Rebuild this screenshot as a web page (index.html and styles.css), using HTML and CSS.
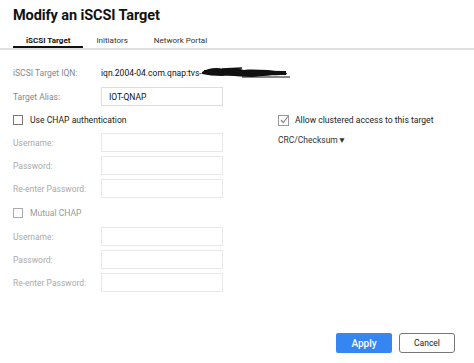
FILE: index.html
```html
<!DOCTYPE html>
<html>
<head>
<meta charset="utf-8">
<link rel="stylesheet" href="styles.css">
</head>
<body>
<div class="dialog">
  <div class="title">Modify an iSCSI Target</div>
  <div class="tabs">
    <div class="tab active">iSCSI Target</div>
    <div class="tab">Initiators</div>
    <div class="tab">Network Portal</div>
  </div>
  <div class="content">
    <div class="left">
      <div class="row row-iqn">
        <span class="label">iSCSI Target IQN:</span>
        <span class="value">iqn.2004-04.com.qnap:tvs-</span>
        <svg class="scribble" width="88" height="14" viewBox="0 0 88 14">
          <path d="M0 7 C6 3 14 2 22 4 C28 2 36 3 42 5 C50 4 58 5 66 5 C74 6 80 7 85 8 L84 10 C70 10 60 11 50 12 C40 12 30 10 20 11 C12 11 6 10 0 9 Z" fill="#111"/>
          <path d="M2 7 L84 8" stroke="#111" stroke-width="4"/>
          <path d="M40 12 L88 12" stroke="#111" stroke-width="1"/>
          <path d="M20 4 L40 3" stroke="#111" stroke-width="1.5"/>
        </svg>
      </div>
      <div class="row row-input row-alias">
        <span class="label">Target Alias:</span>
        <div class="input"><span class="input-text">IOT-QNAP</span></div>
      </div>
      <div class="row row-check row-chap">
        <span class="box"></span>
        <span class="check-text">Use CHAP authentication</span>
      </div>
      <div class="row row-input first disabled">
        <span class="label">Username:</span>
        <div class="input"></div>
      </div>
      <div class="row row-input disabled">
        <span class="label">Password:</span>
        <div class="input"></div>
      </div>
      <div class="row row-input disabled">
        <span class="label">Re-enter Password:</span>
        <div class="input"></div>
      </div>
      <div class="row row-check row-mutual disabled">
        <span class="box"></span>
        <span class="check-text">Mutual CHAP</span>
      </div>
      <div class="row row-input first2 disabled">
        <span class="label">Username:</span>
        <div class="input"></div>
      </div>
      <div class="row row-input disabled">
        <span class="label">Password:</span>
        <div class="input"></div>
      </div>
      <div class="row row-input disabled">
        <span class="label">Re-enter Password:</span>
        <div class="input"></div>
      </div>
    </div>
    <div class="right">
      <div class="row row-check">
        <span class="box checked">
          <svg width="10" height="10" viewBox="0 0 10 10"><path d="M2 5 L4.2 7.5 L9 1.5" fill="none" stroke="#888" stroke-width="1.2"/></svg>
        </span>
        <span class="check-text">Allow clustered access to this target</span>
      </div>
      <div class="crc">CRC/Checksum&#9660;</div>
    </div>
  </div>
  <div class="footer">
    <button class="btn apply">Apply</button>
    <button class="btn cancel">Cancel</button>
  </div>
</div>
</body>
</html>
```

FILE: styles.css
```css
html, body {
  margin: 0;
  padding: 0;
  background: #fff;
}
body {
  font-family: Roboto, "Liberation Sans", sans-serif;
  color: #333;
}
.dialog {
  height: 363px;
  display: flex;
  flex-direction: column;
  box-sizing: border-box;
}
.title {
  font-size: 14.5px;
  font-weight: bold;
  color: #111;
  padding: 7px 13px 0;
  line-height: 18px;
  height: 22px;
  letter-spacing: -0.1px;
}
.tabs {
  display: flex;
  padding: 0 13px;
  border-bottom: 2px solid #e0e0e0;
  height: 19px;
}
.tab {
  font-size: 8px;
  color: #333;
  padding: 7px 13px 0;
  line-height: 10px;
  height: 10px;
}
.tab.active {
  font-weight: bold;
  color: #111;
  border-bottom: 2px solid #111;
}
.content {
  display: flex;
  padding: 12px 0 0 13px;
}
.left {
  width: 265px;
  display: flex;
  flex-direction: column;
}
.right {
  padding-top: 46px;
  display: flex;
  flex-direction: column;
}
.row {
  display: flex;
  align-items: center;
  font-size: 8.5px;
  white-space: nowrap;
}
.label {
  width: 88px;
  flex: none;
  color: #888;
}
.row-iqn {
  height: 22px;
}
.value {
  color: #111;
  flex: none;
}
.scribble {
  flex: none;
  margin-top: -2px;
}
.row-input {
  height: 19px;
  margin-top: 4px;
}
.row-alias {
  height: 19px;
  margin-top: 3px;
}
.row-input.first {
  margin-top: 1px;
}
.row-input.first2 {
  margin-top: 2px;
}
.input {
  width: 122px;
  height: 100%;
  box-sizing: border-box;
  border: 1px solid #ddd;
  display: flex;
  align-items: center;
  padding-left: 7px;
}
.input-text {
  color: #111;
  font-size: 8.5px;
}
.disabled .label {
  color: #aaa;
}
.disabled .input {
  border-color: #e8e8e8;
}
.row-check {
  height: 24px;
}
.row-chap {
  margin-top: 2px;
}
.row-mutual {
  margin-top: 3px;
}
.box {
  width: 8px;
  height: 8px;
  border: 1px solid #777;
  flex: none;
  margin-right: 7px;
  position: relative;
}
.box.checked {
  width: 9px;
  height: 9px;
  border-color: #999;
  margin-right: 6px;
}
.box svg {
  position: absolute;
  left: 0;
  top: -1px;
}
.check-text {
  color: #222;
  font-size: 8.6px;
}
.disabled .box {
  border-color: #aaa;
}
.disabled .check-text {
  color: #999;
}
.crc {
  font-size: 8.5px;
  color: #333;
  line-height: 12px;
  margin-top: 2px;
}
.footer {
  margin-top: auto;
  display: flex;
  justify-content: flex-end;
  gap: 7px;
  padding: 0 19px 10px 0;
}
.btn {
  width: 56px;
  height: 20px;
  font-size: 8.5px;
  border-radius: 2px;
  font-family: Roboto, "Liberation Sans", sans-serif;
  padding: 0;
}
.apply {
  background: #3585f3;
  color: #fff;
  border: none;
  font-weight: 500;
  font-size: 10px;
}
.cancel {
  background: #fff;
  color: #222;
  border: 1px solid #777;
  border-radius: 3px;
}
```
